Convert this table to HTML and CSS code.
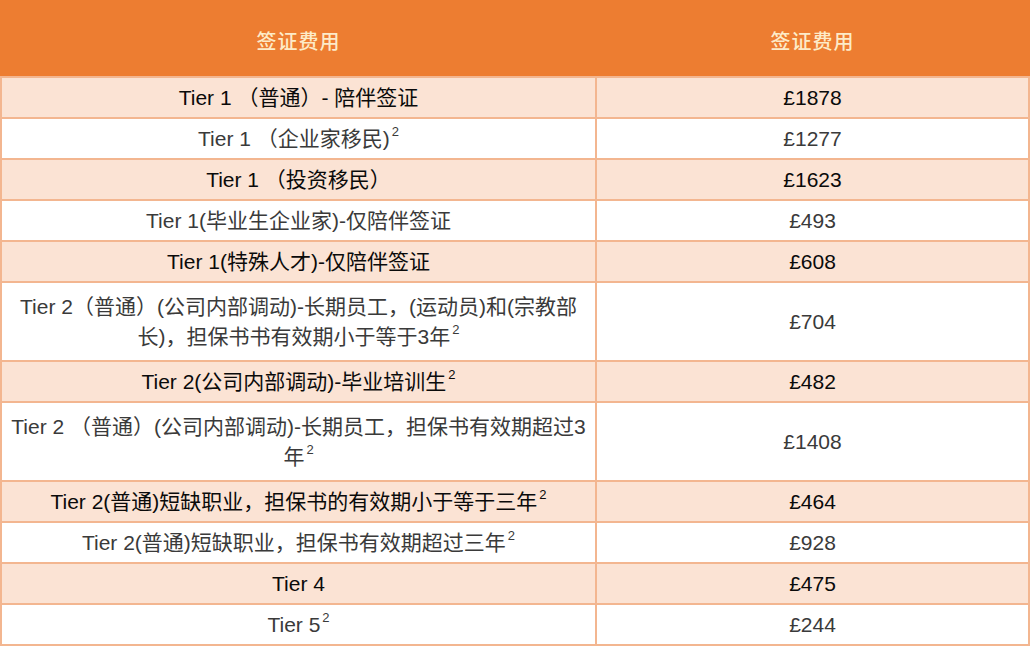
FILE: index.html
```html
<!DOCTYPE html>
<html lang="zh-CN">
<head>
<meta charset="utf-8">
<title>签证费用</title>
<link rel="stylesheet" href="styles.css">
</head>
<body>
<div class="fees">
  <div class="head">
    <div class="th">签证费用</div>
    <div class="th">签证费用</div>
  </div>
  <div class="body">
    <div class="td shade"><span>Tier 1 （普通）- 陪伴签证</span></div><div class="td shade"><span>£1878</span></div>
    <div class="td"><span>Tier 1 （企业家移民)<sup>2</sup></span></div><div class="td"><span>£1277</span></div>
    <div class="td shade"><span>Tier 1 （投资移民）</span></div><div class="td shade"><span>£1623</span></div>
    <div class="td"><span>Tier 1(毕业生企业家)-仅陪伴签证</span></div><div class="td"><span>£493</span></div>
    <div class="td shade"><span>Tier 1(特殊人才)-仅陪伴签证</span></div><div class="td shade"><span>£608</span></div>
    <div class="td"><span>Tier 2（普通）(公司内部调动)-长期员工，(运动员)和(宗教部<br>长)，担保书书有效期小于等于3年<sup>2</sup></span></div><div class="td"><span>£704</span></div>
    <div class="td shade"><span>Tier 2(公司内部调动)-毕业培训生<sup>2</sup></span></div><div class="td shade"><span>£482</span></div>
    <div class="td"><span>Tier 2 （普通）(公司内部调动)-长期员工，担保书有效期超过3<br>年<sup>2</sup></span></div><div class="td"><span>£1408</span></div>
    <div class="td shade"><span>Tier 2(普通)短缺职业，担保书的有效期小于等于三年<sup>2</sup></span></div><div class="td shade"><span>£464</span></div>
    <div class="td"><span>Tier 2(普通)短缺职业，担保书有效期超过三年<sup>2</sup></span></div><div class="td"><span>£928</span></div>
    <div class="td shade"><span>Tier 4</span></div><div class="td shade"><span>£475</span></div>
    <div class="td"><span>Tier 5<sup>2</sup></span></div><div class="td"><span>£244</span></div>
  </div>
</div>
</body>
</html>
```

FILE: styles.css
```css
html, body {
  margin: 0;
  padding: 0;
  background: #ffffff;
}

.fees {
  width: 1030px;
  height: 646px;
  font-family: "Liberation Sans", "Noto Sans CJK SC", sans-serif;
  font-size: 21px;
}

.head {
  display: grid;
  grid-template-columns: 595px 435px;
  height: 76px;
  background: #ed7d31;
}

.th {
  display: flex;
  align-items: center;
  justify-content: center;
  padding-top: 5px;
  color: #fdebc8;
  font-family: "Noto Sans CJK SC", sans-serif;
  font-weight: 500;
  font-size: 20px;
  letter-spacing: 1px;
}

.head .th:first-child {
  padding-left: 2px;
}

.body {
  display: grid;
  grid-template-columns: 593px 431px;
  grid-template-rows: repeat(5, 39px) 77px 39px 77px repeat(4, 39px);
  gap: 2px;
  padding: 2px;
  background: #f3b690;
}

.td {
  display: flex;
  align-items: center;
  justify-content: center;
  text-align: center;
  white-space: nowrap;
  line-height: 30px;
  padding-top: 1px;
  background: #ffffff;
  color: #3a3a3a;
}

.td.shade {
  background: #fbe3d4;
  color: #0a0a0a;
}

sup {
  font-size: 13px;
  line-height: 0;
  vertical-align: 0;
  position: relative;
  top: -10px;
  margin-left: 2px;
}
```
